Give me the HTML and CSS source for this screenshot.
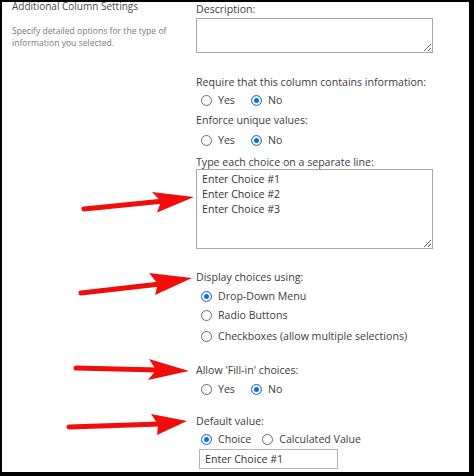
FILE: index.html
```html
<!DOCTYPE html>
<html lang="en">
<head>
<meta charset="utf-8">
<title>Additional Column Settings</title>
<link rel="stylesheet" href="styles.css">
</head>
<body>
<div class="frame">
  <div class="layout">
    <aside class="side">
      <h2 class="side-title">Additional Column Settings</h2>
      <p class="side-desc">Specify detailed options for the type of information you selected.</p>
    </aside>
    <main class="form">
      <div class="label">Description:</div>
      <textarea class="area area-desc"></textarea>

      <div class="label gap-req">Require that this column contains information:</div>
      <div class="row mt4">
        <span class="opt opt-yes"><span class="radio"></span>Yes</span>
        <span class="opt"><span class="radio on"></span>No</span>
      </div>

      <div class="label mt6">Enforce unique values:</div>
      <div class="row mt6">
        <span class="opt opt-yes"><span class="radio"></span>Yes</span>
        <span class="opt"><span class="radio on"></span>No</span>
      </div>

      <div class="label mt8">Type each choice on a separate line:</div>
      <textarea class="area area-choices">Enter Choice #1
Enter Choice #2
Enter Choice #3</textarea>

      <div class="label gap-disp">Display choices using:</div>
      <div class="row mt5"><span class="opt"><span class="radio on"></span>Drop-Down Menu</span></div>
      <div class="row mt5"><span class="opt"><span class="radio"></span>Radio Buttons</span></div>
      <div class="row mt7"><span class="opt"><span class="radio"></span>Checkboxes (allow multiple selections)</span></div>

      <div class="label gap-allow">Allow 'Fill-in' choices:</div>
      <div class="row mt5">
        <span class="opt opt-yes"><span class="radio"></span>Yes</span>
        <span class="opt"><span class="radio on"></span>No</span>
      </div>

      <div class="label gap-default">Default value:</div>
      <div class="row mt4">
        <span class="opt opt-choice"><span class="radio on"></span>Choice</span>
        <span class="opt"><span class="radio"></span>Calculated Value</span>
      </div>
      <input class="text-input" type="text" value="Enter Choice #1">
    </main>
  </div>

  <svg class="arrows" width="474" height="476" viewBox="0 0 474 476" aria-hidden="true">
    <g fill="#f20d0d" stroke="none">
      <line x1="84" y1="209" x2="164" y2="201" stroke="#f20d0d" stroke-width="5" stroke-linecap="round"/>
      <polygon points="194,197 152,192 161,201.5 157,212.5"/>

      <line x1="81" y1="293" x2="160" y2="284" stroke="#f20d0d" stroke-width="5" stroke-linecap="round"/>
      <polygon points="192,278 149,273 158,284 155,295"/>

      <line x1="76" y1="368" x2="158" y2="370" stroke="#f20d0d" stroke-width="5" stroke-linecap="round"/>
      <polygon points="189,371 149,359 156,370 148,380"/>

      <line x1="69" y1="427" x2="160" y2="424" stroke="#f20d0d" stroke-width="5" stroke-linecap="round"/>
      <polygon points="187,421 151,414 158,424.5 157,435"/>
    </g>
  </svg>
</div>
</body>
</html>
```

FILE: styles.css
```css
* { box-sizing: border-box; }

html, body {
  margin: 0;
  padding: 0;
  background: #fff;
}

.frame {
  position: relative;
  width: 474px;
  height: 476px;
  border-style: solid;
  border-color: #000;
  border-width: 2px 5px 4px 2px;
  overflow: hidden;
  background: #fff;
  font-family: "Open Sans", "Noto Sans", sans-serif;
  color: #3a3a3a;
}

.layout {
  display: flex;
  align-items: flex-start;
}

.side {
  width: 194px;
  flex: none;
  padding-left: 10px;
  margin-top: -2px;
}

.side-title {
  margin: 0;
  font-size: 10px;
  line-height: 13px;
  font-weight: normal;
  color: #4a4a4a;
}

.side-desc {
  margin: 13px 0 0;
  width: 165px;
  font-size: 8.6px;
  line-height: 11.5px;
  color: #7a7a7a;
}

.form {
  flex: 1;
  display: flex;
  flex-direction: column;
  align-items: flex-start;
  font-size: 10.6px;
}

.label {
  line-height: 14px;
  height: 14px;
  white-space: nowrap;
  color: #3c3c3c;
}

.area {
  display: block;
  width: 237px;
  margin: 0;
  border: 1px solid #a8a8a8;
  border-radius: 0;
  font-family: "Open Sans", "Noto Sans", sans-serif;
  font-size: 10.6px;
  line-height: 15px;
  color: #333;
  padding: 2px 5px;
  background: #fff;
  outline: none;
}

.area-desc {
  height: 35px;
  margin-top: 2px;
}

.area-choices {
  height: 80px;
}

.row {
  display: flex;
  align-items: center;
  height: 14px;
  padding-left: 5px;
  white-space: nowrap;
  color: #3c3c3c;
}

.opt {
  display: inline-flex;
  align-items: center;
  gap: 6px;
}

.opt-yes { margin-right: 16px; }
.opt-choice { margin-right: 11px; }

.radio {
  display: inline-block;
  width: 11px;
  height: 11px;
  border-radius: 50%;
  border: 1px solid #6a6a6a;
  background: #fff;
  flex: none;
}

.radio.on {
  border-color: #2b7fd6;
  background: #0a6fd8;
  box-shadow: inset 0 0 0 2px #fff;
}

.mt4 { margin-top: 4px; }
.mt5 { margin-top: 5px; }
.mt6 { margin-top: 6px; }
.mt7 { margin-top: 7px; }
.mt8 { margin-top: 8px; }
.gap-req { margin-top: 22px; }
.gap-disp { margin-top: 21px; }
.gap-allow { margin-top: 20px; }
.gap-default { margin-top: 18px; }

.text-input {
  display: block;
  margin: 3px 0 0 3px;
  width: 139px;
  height: 20px;
  border: 1px solid #b4b4b4;
  border-radius: 0;
  padding: 0 5px;
  font-family: "Open Sans", "Noto Sans", sans-serif;
  font-size: 10.6px;
  color: #333;
  background: #fff;
  outline: none;
}

.arrows {
  position: absolute;
  left: -2px;
  top: -2px;
  pointer-events: none;
}
```
